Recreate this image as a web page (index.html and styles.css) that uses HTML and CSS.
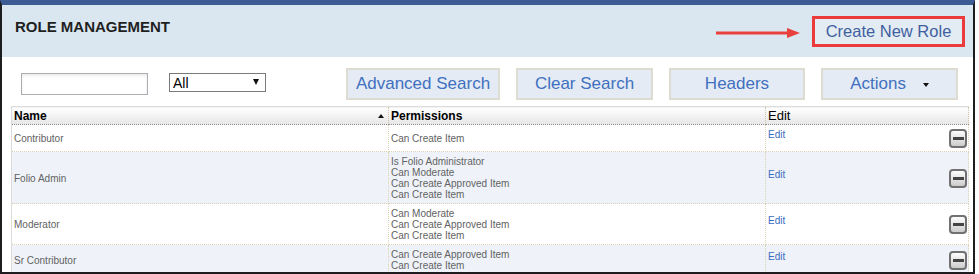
FILE: index.html
```html
<!DOCTYPE html>
<html lang="en">
<head>
    <meta charset="UTF-8">
    <meta name="viewport" content="width=device-width, initial-scale=1.0">
    <title>Role Management</title>
    <link rel="stylesheet" href="styles.css">
</head>
<body>

<div class="frame">
    <div class="page-head">
        <h1 class="page-title">ROLE MANAGEMENT</h1>
        <div class="callout">
            <svg class="callout-arrow" width="84" height="12" viewBox="0 0 84 12">
                <line x1="0" y1="6" x2="74" y2="6" stroke="#e8403d" stroke-width="3"/>
                <polygon points="71,1 84,6 71,11" fill="#e8403d"/>
            </svg>
            <button class="create-btn">Create New Role</button>
        </div>
    </div>

    <div class="toolbar">
        <input type="text" class="search-input">
        <div class="filter-select">
            <select>
                <option>All</option>
            </select>
        </div>
        <div class="toolbar-actions">
            <button class="tool-btn btn-advanced">Advanced Search</button>
            <button class="tool-btn btn-clear">Clear Search</button>
            <button class="tool-btn btn-headers">Headers</button>
            <button class="tool-btn btn-actions">Actions <span class="caret"></span></button>
        </div>
    </div>

    <table class="role-table">
        <colgroup>
            <col class="col-name">
            <col class="col-perms">
            <col class="col-edit">
        </colgroup>
        <tr>
            <th><div class="th-inner">Name <span class="sort-asc"></span></div></th>
            <th>Permissions</th>
            <th class="th-edit">Edit</th>
        </tr>
        <tr>
            <td>Contributor</td>
            <td>Can Create Item</td>
            <td class="edit-cell"><div class="edit-wrap"><a href="#" class="edit-link">Edit</a><button class="remove-btn"></button></div></td>
        </tr>
        <tr class="alt">
            <td>Folio Admin</td>
            <td>Is Folio Administrator<br>Can Moderate<br>Can Create Approved Item<br>Can Create Item</td>
            <td class="edit-cell"><div class="edit-wrap"><a href="#" class="edit-link">Edit</a><button class="remove-btn"></button></div></td>
        </tr>
        <tr>
            <td>Moderator</td>
            <td>Can Moderate<br>Can Create Approved Item<br>Can Create Item</td>
            <td class="edit-cell"><div class="edit-wrap"><a href="#" class="edit-link">Edit</a><button class="remove-btn"></button></div></td>
        </tr>
        <tr class="alt">
            <td>Sr Contributor</td>
            <td>Can Create Approved Item<br>Can Create Item</td>
            <td class="edit-cell"><div class="edit-wrap"><a href="#" class="edit-link">Edit</a><button class="remove-btn"></button></div></td>
        </tr>
    </table>
</div>

</body>
</html>
```

FILE: styles.css
```css
        body {
            margin: 0;
            background: #fff;
            font-family: 'Liberation Sans', Arial, Helvetica, sans-serif;
        }

        .frame {
            width: 975px;
            height: 274px;
            box-sizing: border-box;
            border: 2px solid #1d1d1d;
            border-top: 5px solid #3d5c94;
            overflow: hidden;
        }

        .page-head {
            display: flex;
            height: 52px;
            padding: 0 8px 0 13px;
            background-color: #dbe7f0;
        }

        .page-title {
            margin: 13px 0 0;
            font-size: 15px;
            line-height: 17px;
            font-weight: bold;
            color: #1f1f1f;
        }

        .callout {
            display: flex;
            align-items: center;
            gap: 12px;
            margin-left: auto;
            margin-top: 11px;
            align-self: flex-start;
        }

        .callout-arrow {
            display: block;
            margin-top: 3px;
        }

        .create-btn {
            width: 153px;
            height: 31px;
            padding: 0;
            border: 3px solid #ec3b3b;
            background-color: #e3ebf3;
            color: #3f5f9f;
            font-family: inherit;
            font-size: 16.5px;
            cursor: pointer;
        }

        .toolbar {
            display: flex;
            align-items: flex-start;
            height: 49px;
            padding: 0 15px 0 19px;
        }

        .search-input {
            width: 127px;
            height: 22px;
            margin: 16px 0 0;
            box-sizing: border-box;
            border: 1px solid #abadb3;
            box-shadow: inset 0 2px 3px rgba(0, 0, 0, 0.08);
        }

        .filter-select {
            position: relative;
            width: 97px;
            height: 19px;
            margin: 16px 0 0 21px;
        }

        .filter-select select {
            width: 100%;
            height: 100%;
            box-sizing: border-box;
            -webkit-appearance: none;
            appearance: none;
            border: 1px solid #7a7a7a;
            border-radius: 0;
            background: #fff;
            padding: 0 0 0 3px;
            font-family: inherit;
            font-size: 14px;
            color: #000;
        }

        .filter-select::after {
            content: '';
            position: absolute;
            right: 7px;
            top: 6px;
            border-left: 3px solid transparent;
            border-right: 3px solid transparent;
            border-top: 6px solid #111;
            pointer-events: none;
        }

        .toolbar-actions {
            display: flex;
            gap: 16px;
            margin-left: auto;
            margin-top: 11px;
        }

        .tool-btn {
            height: 32px;
            padding: 0;
            border: 2px solid #dddbd2;
            background-color: #e4ebf4;
            color: #4170c0;
            font-family: inherit;
            font-size: 17px;
            cursor: pointer;
        }

        .btn-advanced { width: 154px; }
        .btn-clear { width: 137px; }
        .btn-headers { width: 136px; }
        .btn-actions { width: 137px; }

        .caret {
            display: inline-block;
            margin-left: 12px;
            vertical-align: middle;
            border-left: 3.5px solid transparent;
            border-right: 3.5px solid transparent;
            border-top: 4px solid #111;
        }

        .role-table {
            width: 957px;
            margin-left: 9px;
            table-layout: fixed;
            border-collapse: collapse;
            border-top: 1px solid #dcdcdc;
            border-left: 1px solid #dcdcdc;
        }

        .col-name { width: 377px; }
        .col-perms { width: 377px; }
        .col-edit { width: 203px; }

        .role-table th {
            height: 16px;
            padding: 1px 2px 0;
            background: linear-gradient(#ffffff, #e6e6e6);
            border-bottom: 1px dotted #8a8a8a;
            border-right: 1px dotted #cdc2a4;
            text-align: left;
            font-size: 12px;
            line-height: 16px;
            font-weight: bold;
            color: #000;
        }

        .role-table th.th-edit {
            font-size: 13px;
            font-weight: normal;
        }

        .th-inner {
            display: flex;
            justify-content: space-between;
            align-items: center;
        }

        .sort-asc {
            margin-right: 2px;
            border-left: 3.5px solid transparent;
            border-right: 3.5px solid transparent;
            border-bottom: 4px solid #111;
        }

        .role-table td {
            padding: 4px 2px 3px;
            border-bottom: 1px dotted #d9cfb3;
            border-right: 1px dotted #dcd2b4;
            vertical-align: middle;
            font-size: 10px;
            line-height: 11px;
            color: #626262;
        }

        .role-table tr.alt td {
            background-color: #eff3f9;
        }

        .role-table td.edit-cell {
            padding-right: 1px;
        }

        .edit-wrap {
            display: flex;
            justify-content: space-between;
            align-items: center;
        }

        .edit-link {
            margin-bottom: 8px;
            color: #3a6cc0;
            text-decoration: none;
        }

        .remove-btn {
            display: flex;
            align-items: center;
            justify-content: center;
            width: 18px;
            height: 19px;
            padding: 0;
            box-sizing: border-box;
            border: 2px solid #717171;
            border-radius: 4px;
            background: linear-gradient(#fdfdfd, #cccccc);
            cursor: pointer;
        }

        .remove-btn::before {
            content: '';
            width: 11px;
            height: 3px;
            background-color: #444;
        }
```
